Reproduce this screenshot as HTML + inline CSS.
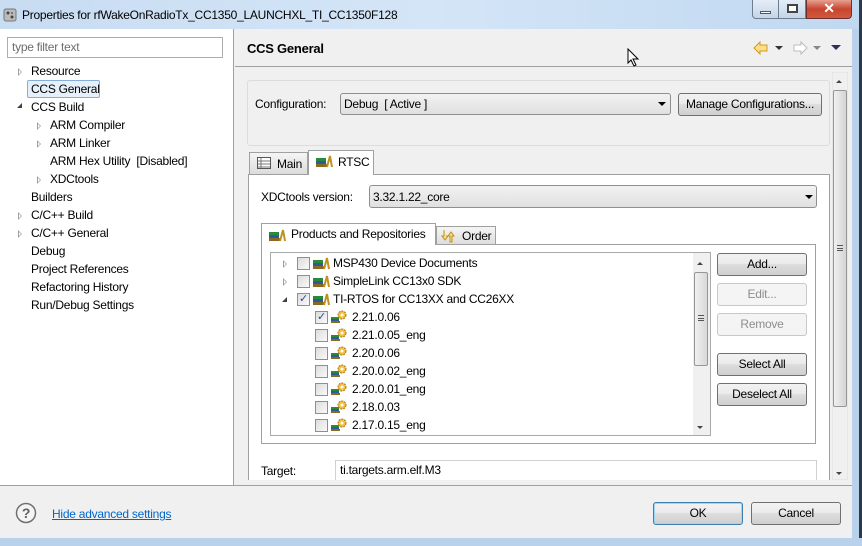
<!DOCTYPE html>
<html><head><meta charset="utf-8"><style>
*{margin:0;padding:0;box-sizing:border-box}
body{width:862px;height:546px;overflow:hidden;font:12px "Liberation Sans",sans-serif;color:#000;background:#f0f0f0;position:relative;letter-spacing:-0.25px}
.a{position:absolute}
.t{position:absolute;white-space:nowrap;line-height:18px;height:18px}
.btn{position:absolute;border:1px solid #707070;border-radius:3px;background:linear-gradient(#f2f2f2 0,#ebebeb 45%,#dddddd 50%,#cfcfcf 100%);text-align:center;line-height:20px}
.dis{border-color:#c8c8c8;background:#f4f4f4;color:#8d8d8d}
.cb{position:absolute;width:13px;height:13px;border:1px solid #8f8f8f;background:linear-gradient(135deg,#dcdcdc,#fafafa)}
.tri{position:absolute;width:0;height:0;border-top:4px solid transparent;border-bottom:4px solid transparent;border-left:4px solid #a0a0a0}
.tri:after{content:"";position:absolute;left:-3px;top:-2px;border-top:2px solid transparent;border-bottom:2px solid transparent;border-left:2px solid #fff}
.open{position:absolute;width:0;height:0;border-left:5px solid transparent;border-bottom:5px solid #404040}
</style></head><body>
<div class="a" style="left:0;top:0;width:862px;height:29px;background:linear-gradient(90deg,#c8dcf2,#d4e5f7 50%,#c0d8f0)"></div>
<div class="a" style="left:852px;top:29px;width:7px;height:517px;background:#b9d1ea"></div>
<div class="a" style="left:859px;top:0;width:3px;height:546px;background:#2c3a4a"></div>
<div class="a" style="left:0;top:538px;width:862px;height:8px;background:#b9d1ea"></div>
<svg class="a" style="left:2px;top:7px" width="16" height="16"><rect x="2" y="2" width="12" height="12" rx="2" fill="#bbb" stroke="#777"/><circle cx="6" cy="6" r="1.5" fill="#444"/><circle cx="10" cy="10" r="1.5" fill="#444"/><circle cx="10" cy="6" r="1" fill="#666"/></svg>
<div class="t" style="left:22px;top:6px;font-size:12px">Properties for rfWakeOnRadioTx_CC1350_LAUNCHXL_TI_CC1350F128</div>
<div class="a" style="left:752px;top:0;width:27px;height:19px;border:1px solid #6d7d90;border-top:0;border-radius:0 0 0 4px;background:linear-gradient(#e4edf7,#c4d5e8)"></div>
<div class="a" style="left:760px;top:11px;width:11px;height:3px;background:#fff;border:1px solid #555"></div>
<div class="a" style="left:779px;top:0;width:27px;height:19px;border:1px solid #6d7d90;border-top:0;border-left:0;background:linear-gradient(#e4edf7,#c4d5e8)"></div>
<div class="a" style="left:787px;top:4px;width:11px;height:9px;border:2px solid #444;background:#fff"></div>
<div class="a" style="left:806px;top:0;width:46px;height:19px;border:1px solid #6d3030;border-top:0;border-radius:0 0 4px 0;background:linear-gradient(#e8a090,#c8452f 50%,#d05a3a);color:#fff;font-weight:bold;text-align:center;line-height:17px;font-size:14px">✕</div>

<div class="a" style="left:0;top:29px;width:234px;height:456px;background:#fff;border-right:1px solid #a0a0a0"></div>
<div class="a" style="left:7px;top:37px;width:216px;height:21px;border:1px solid #abadb3;background:#fff"></div>
<div class="t" style="left:12px;top:38px;color:#6d6d6d">type filter text</div>
<div class="tri" style="left:18px;top:68px"></div>
<div class="t" style="left:31px;top:62px">Resource</div>
<div class="a" style="left:27px;top:80px;width:73px;height:18px;border:1px solid #84acdd;border-radius:2px;background:#e5f0fb"></div>
<div class="t" style="left:31px;top:80px">CCS General</div>
<div class="open" style="left:17px;top:103px"></div>
<div class="t" style="left:31px;top:98px">CCS Build</div>
<div class="tri" style="left:37px;top:122px"></div>
<div class="t" style="left:50px;top:116px">ARM Compiler</div>
<div class="tri" style="left:37px;top:140px"></div>
<div class="t" style="left:50px;top:134px">ARM Linker</div>
<div class="t" style="left:50px;top:152px">ARM Hex Utility&nbsp; [Disabled]</div>
<div class="tri" style="left:37px;top:176px"></div>
<div class="t" style="left:50px;top:170px">XDCtools</div>
<div class="t" style="left:31px;top:188px">Builders</div>
<div class="tri" style="left:18px;top:212px"></div>
<div class="t" style="left:31px;top:206px">C/C++ Build</div>
<div class="tri" style="left:18px;top:230px"></div>
<div class="t" style="left:31px;top:224px">C/C++ General</div>
<div class="t" style="left:31px;top:242px">Debug</div>
<div class="t" style="left:31px;top:260px">Project References</div>
<div class="t" style="left:31px;top:278px">Refactoring History</div>
<div class="t" style="left:31px;top:296px">Run/Debug Settings</div>

<div class="a" style="left:235px;top:66px;width:617px;height:1px;background:#a0a0a0"></div>
<div class="t" style="left:247px;top:40px;font-weight:bold;font-size:13px">CCS General</div>
<svg class="a" style="left:752px;top:40px" width="95" height="16">
<path d="M2 8 L8 2 L8 5 L15 5 L15 11 L8 11 L8 14 Z" fill="#fbe08a" stroke="#d49a20"/>
<path d="M23 6 L31 6 L27 10 Z" fill="#333"/>
<path d="M55 8 L49 2 L49 5 L42 5 L42 11 L49 11 L49 14 Z" fill="#fff" stroke="#bbb"/>
<path d="M61 6 L69 6 L65 10 Z" fill="#888"/>
<path d="M79 5 L89 5 L84 10 Z" fill="#3a2a5a"/>
</svg>
<svg class="a" style="left:627px;top:48px" width="14" height="20"><path d="M1 1 L1 15 L4 12 L7 18 L9 17 L6 11 L11 11 Z" fill="#fff" stroke="#000"/></svg>

<div class="a" style="left:247px;top:80px;width:583px;height:66px;border:1px solid #dcdcdc;border-radius:3px"></div>
<div class="t" style="left:255px;top:95px">Configuration:</div>
<div class="a" style="left:340px;top:93px;width:331px;height:22px;border:1px solid #8e8f8f;border-radius:3px;background:linear-gradient(#f2f2f2,#e0e0e0)"></div>
<div class="t" style="left:344px;top:95px">Debug&nbsp; [ Active ]</div>
<div class="a" style="left:658px;top:102px;border-left:4px solid transparent;border-right:4px solid transparent;border-top:4px solid #000"></div>
<div class="btn" style="left:678px;top:93px;width:144px;height:23px">Manage Configurations...</div>

<div class="a" style="left:249px;top:152px;width:59px;height:22px;border:1px solid #a0a0a0;border-bottom:0;background:linear-gradient(#f5f5f5,#dcdcdc)"></div>
<svg class="a" style="left:257px;top:157px" width="14" height="12"><rect x="0.5" y="0.5" width="13" height="11" fill="#fff" stroke="#555"/><path d="M1 4H13M1 7H13M1 10H13M4 1V11" stroke="#777"/></svg>
<div class="t" style="left:277px;top:155px">Main</div>
<div class="a" style="left:308px;top:150px;width:66px;height:25px;border:1px solid #a0a0a0;border-bottom:0;background:#fff;z-index:2"></div>
<svg class="a" style="left:316px;top:155px;z-index:3" width="17" height="13"><rect x="0" y="3" width="10" height="3" fill="#2a8a3a"/><rect x="0" y="6" width="10" height="3" fill="#2a5aa0"/><rect x="0" y="9" width="12" height="3" fill="#8a6a20"/><path d="M11 12 L14 1 L16 12" stroke="#c09020" stroke-width="2" fill="none"/></svg>
<div class="t" style="left:338px;top:153px;z-index:3">RTSC</div>
<div class="a" style="left:248px;top:174px;width:582px;height:306px;border:1px solid #a0a0a0;border-bottom:0;background:#fff"></div>

<div class="t" style="left:261px;top:188px">XDCtools version:</div>
<div class="a" style="left:369px;top:185px;width:448px;height:23px;border:1px solid #8e8f8f;border-radius:3px;background:linear-gradient(#f2f2f2,#e0e0e0)"></div>
<div class="t" style="left:373px;top:188px">3.32.1.22_core</div>
<div class="a" style="left:805px;top:195px;border-left:4px solid transparent;border-right:4px solid transparent;border-top:4px solid #000"></div>

<div class="a" style="left:261px;top:223px;width:175px;height:22px;border:1px solid #a0a0a0;border-bottom:0;background:#fff;z-index:2"></div>
<svg class="a" style="left:269px;top:229px;z-index:3" width="17" height="13"><rect x="0" y="3" width="10" height="3" fill="#2a8a3a"/><rect x="0" y="6" width="10" height="3" fill="#2a5aa0"/><rect x="0" y="9" width="12" height="3" fill="#8a6a20"/><path d="M11 12 L14 1 L16 12" stroke="#c09020" stroke-width="2" fill="none"/></svg>
<div class="t" style="left:291px;top:225px;z-index:3">Products and Repositories</div>
<div class="a" style="left:436px;top:226px;width:60px;height:19px;border:1px solid #a0a0a0;border-bottom:0;background:linear-gradient(#f5f5f5,#dcdcdc)"></div>
<svg class="a" style="left:441px;top:229px" width="16" height="14"><path d="M3 1V7H1L4 11L7 7H5" stroke="#c09020" fill="#fbe08a"/><path d="M11 13V7H13L10 3L7 7H9V13Z" fill="#fbe08a" stroke="#c09020"/></svg>
<div class="t" style="left:462px;top:227px">Order</div>
<div class="a" style="left:261px;top:244px;width:555px;height:200px;border:1px solid #a0a0a0;background:#fff"></div>
<div class="a" style="left:270px;top:252px;width:441px;height:184px;border:1px solid #a9a9a9;background:#fff"></div>
<div class="a" style="left:693px;top:253px;width:17px;height:182px;background:#f0f0f0"></div>
<div class="a" style="left:697px;top:262px;border-left:3px solid transparent;border-right:3px solid transparent;border-bottom:3px solid #444"></div>
<div class="a" style="left:694px;top:272px;width:14px;height:94px;border:1px solid #969696;border-radius:2px;background:linear-gradient(90deg,#f0f0f0,#d8d8d8)"></div>
<div class="a" style="left:698px;top:315px;width:6px;height:6px;border-top:1px solid #555;border-bottom:1px solid #555"><div style="margin-top:2px;height:1px;background:#555"></div></div>
<div class="a" style="left:697px;top:426px;border-left:3px solid transparent;border-right:3px solid transparent;border-top:3px solid #444"></div>

<div class="tri" style="left:283px;top:260px"></div>
<div class="cb" style="left:297px;top:257px"></div>
<svg class="a" style="left:313px;top:257px" width="17" height="13"><rect x="0" y="3" width="10" height="3" fill="#2a8a3a"/><rect x="0" y="6" width="10" height="3" fill="#2a5aa0"/><rect x="0" y="9" width="12" height="3" fill="#8a6a20"/><path d="M11 12 L14 1 L16 12" stroke="#c09020" stroke-width="2" fill="none"/></svg>
<div class="t" style="left:333px;top:254px">MSP430 Device Documents</div>
<div class="tri" style="left:283px;top:278px"></div>
<div class="cb" style="left:297px;top:275px"></div>
<svg class="a" style="left:313px;top:275px" width="17" height="13"><rect x="0" y="3" width="10" height="3" fill="#2a8a3a"/><rect x="0" y="6" width="10" height="3" fill="#2a5aa0"/><rect x="0" y="9" width="12" height="3" fill="#8a6a20"/><path d="M11 12 L14 1 L16 12" stroke="#c09020" stroke-width="2" fill="none"/></svg>
<div class="t" style="left:333px;top:272px">SimpleLink CC13x0 SDK</div>
<div class="open" style="left:282px;top:297px"></div>
<div class="cb" style="left:297px;top:293px"></div><div class="t" style="left:299px;top:290px;color:#2c4a9a;font-size:11px">✓</div>
<svg class="a" style="left:313px;top:293px" width="17" height="13"><rect x="0" y="3" width="10" height="3" fill="#2a8a3a"/><rect x="0" y="6" width="10" height="3" fill="#2a5aa0"/><rect x="0" y="9" width="12" height="3" fill="#8a6a20"/><path d="M11 12 L14 1 L16 12" stroke="#c09020" stroke-width="2" fill="none"/></svg>
<div class="t" style="left:333px;top:290px">TI-RTOS for CC13XX and CC26XX</div>

<div class="cb" style="left:315px;top:311px"></div><div class="t" style="left:317px;top:308px;color:#2c4a9a;font-size:11px">✓</div>
<div class="t" style="left:352px;top:308px">2.21.0.06</div>
<div class="cb" style="left:315px;top:329px"></div><div class="t" style="left:352px;top:326px">2.21.0.05_eng</div>
<div class="cb" style="left:315px;top:347px"></div><div class="t" style="left:352px;top:344px">2.20.0.06</div>
<div class="cb" style="left:315px;top:365px"></div><div class="t" style="left:352px;top:362px">2.20.0.02_eng</div>
<div class="cb" style="left:315px;top:383px"></div><div class="t" style="left:352px;top:380px">2.20.0.01_eng</div>
<div class="cb" style="left:315px;top:401px"></div><div class="t" style="left:352px;top:398px">2.18.0.03</div>
<div class="cb" style="left:315px;top:419px"></div><div class="t" style="left:352px;top:416px">2.17.0.15_eng</div>
<svg class="a" style="left:331px;top:309px" width="18" height="126">
<g id="g"><rect x="0" y="8" width="8" height="2" fill="#2a8a3a"/><rect x="0" y="10" width="8" height="2" fill="#2a5aa0"/><rect x="0" y="12" width="9" height="2" fill="#8a6a20"/><circle cx="11" cy="6" r="4" fill="#f0c040" stroke="#b07010" stroke-dasharray="2 1"/><circle cx="11" cy="6" r="1.5" fill="#fff"/></g>
<use href="#g" y="18"/><use href="#g" y="36"/><use href="#g" y="54"/><use href="#g" y="72"/><use href="#g" y="90"/><use href="#g" y="108"/>
</svg>

<div class="btn" style="left:717px;top:253px;width:90px;height:23px">Add...</div>
<div class="btn dis" style="left:717px;top:283px;width:90px;height:23px">Edit...</div>
<div class="btn dis" style="left:717px;top:313px;width:90px;height:23px">Remove</div>
<div class="btn" style="left:717px;top:353px;width:90px;height:23px">Select All</div>
<div class="btn" style="left:717px;top:383px;width:90px;height:23px">Deselect All</div>

<div class="t" style="left:261px;top:462px">Target:</div>
<div class="a" style="left:335px;top:460px;width:482px;height:20px;border:1px solid #d0d0d0;border-bottom:0;background:#fff"></div>
<div class="t" style="left:340px;top:461px">ti.targets.arm.elf.M3</div>

<div class="a" style="left:832px;top:72px;width:16px;height:408px;background:#f0f0f0;border:1px solid #e6e6e6"></div>
<div class="a" style="left:836px;top:80px;border-left:3px solid transparent;border-right:3px solid transparent;border-bottom:3px solid #444"></div>
<div class="a" style="left:833px;top:90px;width:14px;height:317px;border:1px solid #969696;border-radius:2px;background:linear-gradient(90deg,#f0f0f0,#d4d4d4)"></div>
<div class="a" style="left:837px;top:245px;width:6px;height:6px;border-top:1px solid #555;border-bottom:1px solid #555"><div style="margin-top:2px;height:1px;background:#555"></div></div>
<div class="a" style="left:836px;top:472px;border-left:3px solid transparent;border-right:3px solid transparent;border-top:3px solid #444"></div>

<div class="a" style="left:0;top:485px;width:852px;height:1px;background:#a0a0a0"></div>
<div class="a" style="left:0;top:486px;width:852px;height:52px;background:#f0f0f0"></div>
<svg class="a" style="left:15px;top:502px" width="22" height="22"><circle cx="11" cy="11" r="9.5" fill="#f4f4f4" stroke="#707070" stroke-width="1.5"/><text x="11" y="16" text-anchor="middle" font-family="Liberation Sans" font-weight="bold" font-size="14" fill="#606060">?</text></svg>
<div class="t" style="left:52px;top:505px;color:#0066cc;text-decoration:underline">Hide advanced settings</div>
<div class="btn" style="left:653px;top:502px;width:90px;height:23px;border-color:#3c7fb1;box-shadow:inset 0 0 0 1px #9fd5f5">OK</div>
<div class="btn" style="left:751px;top:502px;width:90px;height:23px">Cancel</div>
</body></html>
